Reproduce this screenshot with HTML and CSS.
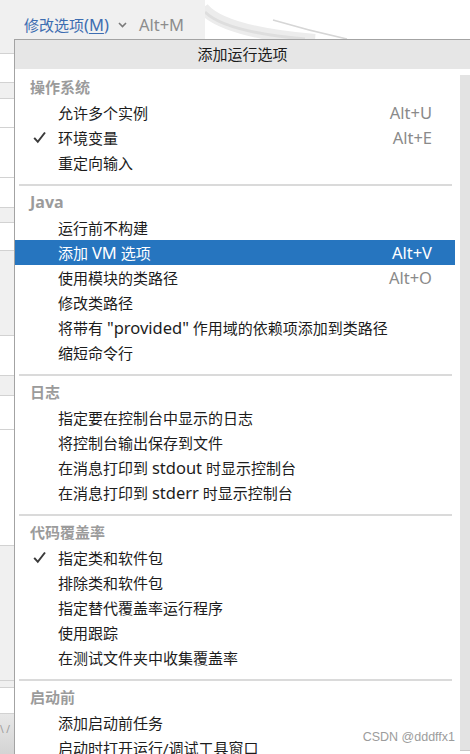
FILE: index.html
```html
<!DOCTYPE html>
<html lang="zh-CN">
<head>
    <meta charset="UTF-8">
    <meta name="viewport" content="width=device-width, initial-scale=1.0">
    <title>添加运行选项</title>
    <link rel="stylesheet" href="styles.css">
</head>
<body>

    <div class="topbar">
        <div class="topbar-left">
            <span class="modify">修改选项<span class="en">(<u>M</u>)</span></span>
            <svg class="chev" width="9" height="6" viewBox="0 0 9 6"><path d="M1 1 L4.5 4.5 L8 1" fill="none" stroke="#7a7a7a" stroke-width="1.6"/></svg>
            <span class="top-key">Alt+M</span>
        </div>
        <div class="topbar-right">
            <svg width="265" height="39" viewBox="0 0 265 39">
                <path d="M-2 8 Q18 32 110 40" fill="none" stroke="#ececec" stroke-width="12"/>
                <path d="M0 12 Q20 32 100 39" fill="none" stroke="#dedede" stroke-width="3"/>
                <path d="M68 20 Q105 31 142 39" fill="none" stroke="#d6d6d6" stroke-width="1.5"/>
            </svg>
        </div>
    </div>

    <div class="main">
        <div class="side">
            <div class="blk g" style="height:14px"></div>
            <div class="blk" style="height:29px"></div>
            <div class="blk g" style="height:16px"></div>
            <div class="blk" style="height:29px"></div>
            <div class="blk" style="height:50px"></div>
            <div class="blk" style="height:30px"></div>
            <div class="blk g" style="height:15px"></div>
            <div class="blk" style="height:28px"></div>
            <div class="blk g" style="height:85px"></div>
            <div class="blk" style="height:40px"></div>
            <div class="blk g" style="height:20px"></div>
            <div class="blk" style="height:34px"></div>
            <div class="blk" style="height:116px"></div>
            <div class="blk g" style="height:135px"></div>
            <div class="blk g" style="height:7px"></div>
            <div class="blk" style="height:26px"></div>
            <div class="blk foot">\ /</div>
        </div>

        <div class="popup">
            <div class="popup-title">添加运行选项</div>
            <div class="popup-body">
                <div class="list">
                    <div class="group first">
                        <div class="group-label">操作系统</div>
                        <div class="item"><span class="mark"></span><span class="label">允许多个实例</span><span class="key">Alt+U</span></div>
                        <div class="item"><span class="mark"><svg width="13" height="13" viewBox="0 0 13 13"><path d="M1.2 6.8 L4.8 10.8 L12 1.5" fill="none" stroke="#3a3a3a" stroke-width="2"/></svg></span><span class="label">环境变量</span><span class="key">Alt+E</span></div>
                        <div class="item"><span class="mark"></span><span class="label">重定向输入</span></div>
                    </div>
                    <div class="sep"></div>
                    <div class="group">
                        <div class="group-label en">Java</div>
                        <div class="item"><span class="mark"></span><span class="label">运行前不构建</span></div>
                        <div class="item active"><span class="mark"></span><span class="label">添加 <span class="en">VM</span> 选项</span><span class="key">Alt+V</span></div>
                        <div class="item"><span class="mark"></span><span class="label">使用模块的类路径</span><span class="key">Alt+O</span></div>
                        <div class="item"><span class="mark"></span><span class="label">修改类路径</span></div>
                        <div class="item"><span class="mark"></span><span class="label">将带有 <span class="en">"provided"</span> 作用域的依赖项添加到类路径</span></div>
                        <div class="item"><span class="mark"></span><span class="label">缩短命令行</span></div>
                    </div>
                    <div class="sep"></div>
                    <div class="group">
                        <div class="group-label">日志</div>
                        <div class="item"><span class="mark"></span><span class="label">指定要在控制台中显示的日志</span></div>
                        <div class="item"><span class="mark"></span><span class="label">将控制台输出保存到文件</span></div>
                        <div class="item"><span class="mark"></span><span class="label">在消息打印到 <span class="en">stdout</span> 时显示控制台</span></div>
                        <div class="item"><span class="mark"></span><span class="label">在消息打印到 <span class="en">stderr</span> 时显示控制台</span></div>
                    </div>
                    <div class="sep"></div>
                    <div class="group">
                        <div class="group-label">代码覆盖率</div>
                        <div class="item"><span class="mark"><svg width="13" height="13" viewBox="0 0 13 13"><path d="M1.2 6.8 L4.8 10.8 L12 1.5" fill="none" stroke="#3a3a3a" stroke-width="2"/></svg></span><span class="label">指定类和软件包</span></div>
                        <div class="item"><span class="mark"></span><span class="label">排除类和软件包</span></div>
                        <div class="item"><span class="mark"></span><span class="label">指定替代覆盖率运行程序</span></div>
                        <div class="item"><span class="mark"></span><span class="label">使用跟踪</span></div>
                        <div class="item"><span class="mark"></span><span class="label">在测试文件夹中收集覆盖率</span></div>
                    </div>
                    <div class="sep"></div>
                    <div class="group">
                        <div class="group-label">启动前</div>
                        <div class="item"><span class="mark"></span><span class="label">添加启动前任务</span></div>
                        <div class="item"><span class="mark"></span><span class="label">启动时打开运行/调试工具窗口</span></div>
                    </div>
                </div>
                <div class="scroll"></div>
            </div>
        </div>
    </div>

    <div class="watermark">CSDN @dddffx1</div>

</body>
</html>
```

FILE: styles.css
```css
body {
    margin: 0;
    width: 470px;
    height: 754px;
    overflow: hidden;
    font-family: "Noto Sans", "Noto Sans CJK SC", sans-serif;
    font-size: 15px;
    color: #1c1c1c;
    background-color: #fff;
    position: relative;
}
.en {
    font-size: 16.5px;
}
.topbar {
    display: flex;
    height: 39px;
}
.topbar-left {
    width: 205px;
    background-color: #f0f0f0;
    display: flex;
    align-items: center;
    padding: 11px 0 0 24px;
    box-sizing: border-box;
    line-height: 28px;
}
.modify {
    color: #3d6db1;
}
.modify u {
    text-underline-offset: 2px;
}
.chev {
    margin: 0 12px 0 9px;
}
.top-key {
    color: #8c8c8c;
    font-size: 16.5px;
}
.topbar-right {
    flex: 1;
    background-color: #fff;
    overflow: hidden;
}
.topbar-right svg {
    display: block;
}
.main {
    display: flex;
    height: 715px;
}
.side {
    width: 14px;
    display: flex;
    flex-direction: column;
}
.blk {
    box-sizing: border-box;
    border-top: 1px solid #d2d2d2;
    background-color: #fff;
    flex-shrink: 0;
}
.blk.g {
    background-color: #f0f0f0;
}
.blk:first-child {
    border-top: none;
}
.blk.foot {
    flex: 1;
    background: linear-gradient(#e8e8e8, #d4d4d4);
    color: #999;
    font-size: 10px;
    line-height: 30px;
    white-space: nowrap;
    overflow: hidden;
}
.popup {
    flex: 1;
    border-left: 1px solid #a3a3a3;
    border-top: 1px solid #a3a3a3;
    background-color: #fff;
}
.popup-title {
    height: 29px;
    line-height: 29px;
    background-color: #e6e6e6;
    text-align: center;
}
.popup-body {
    display: flex;
}
.list {
    width: 440px;
}
.group {
    padding: 3px 0 9px;
}
.group.first {
    padding-top: 5px;
}
.group-label {
    height: 26px;
    line-height: 26px;
    padding-left: 15px;
    font-weight: bold;
    color: #9b9b9b;
}
.group-label.en {
    font-size: 16px;
}
.item {
    height: 25px;
    display: flex;
    align-items: center;
    padding: 0 23px 0 18px;
    white-space: nowrap;
}
.item.active {
    background-color: #2675bf;
    color: #fff;
}
.mark {
    width: 25px;
    height: 25px;
    display: flex;
    align-items: center;
    flex-shrink: 0;
}
.key {
    margin-left: auto;
    color: #8a8a8a;
    font-size: 16.5px;
}
.item.active .key {
    color: #fff;
}
.sep {
    height: 2px;
    background-color: #dadada;
    margin: 0 3px 0 4px;
}
.scroll {
    width: 10px;
    height: 675px;
    margin: 6px 0 0 5px;
    background-color: #e3e3e3;
    border-bottom: 1px solid #c8c8c8;
}
.watermark {
    position: absolute;
    right: 15px;
    top: 730px;
    font-family: "Liberation Sans", Arial, sans-serif;
    font-size: 12.5px;
    color: #9c9c9c;
}
```
